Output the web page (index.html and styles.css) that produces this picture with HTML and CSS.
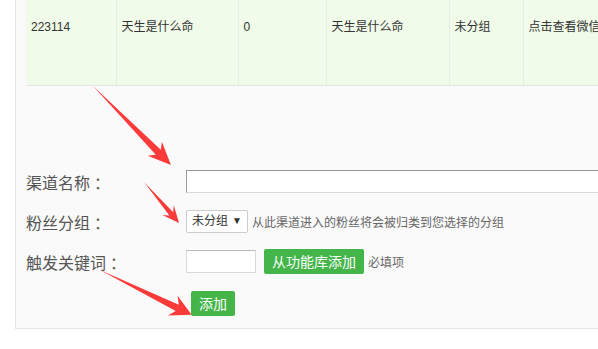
FILE: index.html
```html
<!DOCTYPE html>
<html lang="zh-CN">
<head>
    <meta charset="UTF-8">
    <meta name="viewport" content="width=device-width, initial-scale=1.0">
    <title>渠道二维码</title>
    <link rel="stylesheet" href="styles.css">
</head>
<body>
    <div class="panel">
        <table class="qr-table">
            <colgroup>
                <col class="c1"><col class="c2"><col class="c3"><col class="c4"><col class="c5"><col class="c6">
            </colgroup>
            <tr>
                <td>223114</td>
                <td>天生是什么命</td>
                <td>0</td>
                <td>天生是什么命</td>
                <td>未分组</td>
                <td>点击查看微信二维码</td>
            </tr>
        </table>

        <form class="channel-form">
            <div class="form-row">
                <label for="channelName">渠道名称<span class="colon">：</span></label>
                <input type="text" id="channelName" class="input-wide">
            </div>
            <div class="form-row">
                <label for="fansGroup">粉丝分组<span class="colon">：</span></label>
                <span class="select-wrap">
                    <select id="fansGroup">
                        <option>未分组</option>
                    </select>
                </span>
                <span class="hint">从此渠道进入的粉丝将会被归类到您选择的分组</span>
            </div>
            <div class="form-row">
                <label for="keyword">触发关键词<span class="colon">：</span></label>
                <input type="text" id="keyword" class="input-small">
                <button type="button" class="btn btn-lib">从功能库添加</button>
                <span class="hint">必填项</span>
            </div>
            <div class="form-row submit-row">
                <button type="button" class="btn btn-add">添加</button>
            </div>
        </form>
    </div>

    <!-- annotation arrows over the screenshot -->
    <svg class="arrows" width="598" height="349" viewBox="0 0 598 349">
        <polygon transform="translate(93,86) rotate(45.4)" points="0,0 93,-3.5 88,-10 111,0 88,10 93,3.5"/>
        <polygon transform="translate(144,182) rotate(49.5)" points="0,0 42,-2.5 37,-7.5 54,0 37,7.5 42,2.5"/>
        <polygon transform="translate(100,270) rotate(26.1)" points="0,0 86,-3.5 81,-11 102,0 81,11 86,3.5"/>
    </svg>
</body>
</html>
```

FILE: styles.css
```css
:root {
    --green: #44b549;
    --row-bg: #f1fbe9;
    --panel-bg: #fafafa;
    --border: #e5e5e5;
    --text: #444;
    --muted: #555;
}

body {
    margin: 0;
    background: #fff;
    font-family: "Liberation Sans", "Noto Sans CJK SC", sans-serif;
    color: var(--text);
    position: relative;
    width: 598px;
    height: 349px;
    overflow: hidden;
}

.panel {
    margin-left: 15px;
    width: 700px;
    background: var(--panel-bg);
    border: 1px solid var(--border);
    border-top: none;
    padding: 0 10px 12px 10px;
}

.qr-table {
    border-collapse: collapse;
    table-layout: fixed;
    width: 640px;
}

.qr-table .c1 { width: 90px; }
.qr-table .c2 { width: 122px; }
.qr-table .c3 { width: 88px; }
.qr-table .c4 { width: 123px; }
.qr-table .c5 { width: 74px; }
.qr-table .c6 { width: 143px; }

.qr-table td {
    background: var(--row-bg);
    height: 85px;
    padding: 18px 5px 0 5px;
    box-sizing: border-box;
    vertical-align: top;
    font-size: 12px;
    line-height: 18px;
    color: #333;
    border-left: 1px solid #e6ece2;
    border-bottom: 1px solid #e6e6e6;
    white-space: nowrap;
    overflow: hidden;
}

.qr-table td:first-child {
    border-left: none;
}

.channel-form {
    margin-top: 84px;
    display: flex;
    flex-direction: column;
    gap: 17px;
}

.form-row {
    display: flex;
    align-items: center;
    height: 23px;
}

.form-row label {
    width: 160px;
    flex-shrink: 0;
    font-size: 16px;
    color: var(--muted);
    padding-top: 1px;
}

.colon {
    margin-left: 4px;
}

.input-wide,
.input-small {
    height: 23px;
    box-sizing: border-box;
    border: 1px solid #d8d8d8;
    border-top-color: #999;
    background: #fff;
    padding: 0 4px;
    font-size: 12px;
}

.input-wide {
    width: 440px;
    border-left-color: #999;
}

.input-small {
    width: 70px;
    border-top-color: #bbb;
}

.select-wrap {
    position: relative;
    display: inline-block;
}

.select-wrap select {
    appearance: none;
    -webkit-appearance: none;
    width: 62px;
    height: 23px;
    border: 1px solid #ccc;
    border-radius: 2px;
    background: #fff;
    padding: 0 0 0 5px;
    font-family: inherit;
    font-size: 12px;
    color: #333;
}

.select-wrap::after {
    content: "▼";
    position: absolute;
    right: 6px;
    top: 5px;
    font-size: 10px;
    color: #333;
    pointer-events: none;
}

.hint {
    font-size: 12px;
    color: #666;
    margin-left: 4px;
}

.btn {
    border: none;
    background: var(--green);
    color: #fff;
    font-family: inherit;
    font-size: 14px;
    border-radius: 2px;
    height: 25px;
    padding: 0;
    cursor: pointer;
}

.btn-lib {
    width: 100px;
    margin-left: 8px;
}

.submit-row {
    padding-left: 165px;
    height: 25px;
    margin-top: 1px;
}

.btn-add {
    width: 44px;
}

.arrows {
    position: absolute;
    top: 0;
    left: 0;
    pointer-events: none;
}

.arrows polygon {
    fill: #fb3a3a;
}
```
